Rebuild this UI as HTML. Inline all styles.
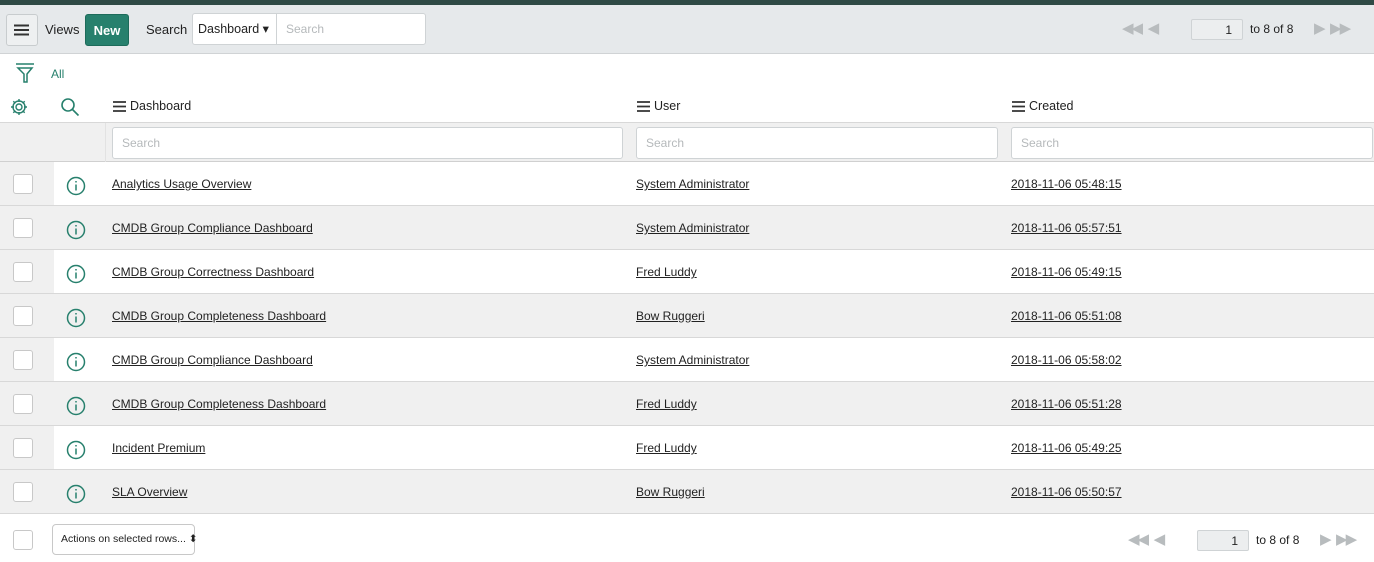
<!DOCTYPE html>
<html><head><style>
*{box-sizing:border-box;margin:0;padding:0}
body{width:1374px;height:562px;background:#fff;font-family:"Liberation Sans",sans-serif;font-size:12px;color:#222;position:relative;overflow:hidden}
.a{position:absolute;white-space:nowrap}
.top{left:0;top:0;width:1374px;height:5px;background:#2f4a45}
.hdr{left:0;top:5px;width:1374px;height:49px;background:#e6e9eb;border-bottom:1px solid #d0d3d5}
.btn{border:1px solid #c8ccce;border-radius:3px;background:#eef0f1}
.inp{background:#fff;border:1px solid #cfd3d5;border-radius:3px;color:#b5b9bb;font-size:12px;padding-left:9px;line-height:30px}
.row{left:0;width:1374px;height:44px;border-bottom:1px solid #d8d8d8}
.cb{width:20px;height:20px;border:1px solid #c8c8c8;border-radius:3px;background:#fff}
a{color:#222;text-decoration:underline}
.pg{color:#b8bcbe;font-size:15px;letter-spacing:-2px}
</style></head><body>
<div class="a top"></div>
<div class="a hdr"></div>
<div class="a btn" style="left:6px;top:14px;width:32px;height:32px"></div>
<svg class="a" style="left:14px;top:24px" width="15" height="12"><path d="M0 1.5h15M0 6h15M0 10.5h15" stroke="#333" stroke-width="2"/></svg>
<div class="a" style="left:45px;top:22px;font-size:13px">Views</div>
<div class="a" style="left:85px;top:14px;width:44px;height:32px;background:#27806d;border-radius:3px;color:#fff;font-weight:bold;font-size:13px;text-align:center;line-height:31px;border:1px solid #1d6b5a">New</div>
<div class="a" style="left:146px;top:22px;font-size:13px">Search</div>
<div class="a" style="left:192px;top:13px;width:234px;height:32px;background:#fff;border:1px solid #cfd3d5;border-radius:3px"></div>
<div class="a" style="left:276px;top:14px;width:1px;height:30px;background:#cfd3d5"></div>
<div class="a" style="left:198px;top:21px;font-size:12.5px">Dashboard ▾</div>
<div class="a" style="left:286px;top:22px;color:#b5b9bb">Search</div>
<div class="a pg" style="left:1122px;top:19px">◀◀ &nbsp; ◀</div>
<div class="a" style="left:1191px;top:19px;width:52px;height:21px;border:1px solid #cfd3d5;background:#eceeef;border-radius:2px;text-align:right;padding-right:10px;line-height:20px">1</div>
<div class="a" style="left:1250px;top:22px">to 8 of 8</div>
<div class="a pg" style="left:1314px;top:19px">▶ &nbsp; ▶▶</div>

<svg class="a" style="left:14px;top:62px" width="22" height="22" fill="none" stroke="#27806d" stroke-width="1.5"><path d="M2 2h18M4 6h14l-5 6v8h-3v-8z"/></svg>
<div class="a" style="left:51px;top:67px;color:#27806d;font-size:12px">All</div>
<svg class="a" style="left:9px;top:97px" width="20" height="20" fill="none" stroke="#27806d" stroke-width="1.4"><circle cx="10" cy="10" r="3"/><path d="M10 2v3M10 15v3M2 10h3M15 10h3M4.3 4.3l2.1 2.1M13.6 13.6l2.1 2.1M4.3 15.7l2.1-2.1M13.6 6.4l2.1-2.1"/><circle cx="10" cy="10" r="6"/></svg>
<svg class="a" style="left:60px;top:97px" width="20" height="20" fill="none" stroke="#27806d" stroke-width="1.6"><circle cx="8" cy="8" r="6"/><path d="M12.5 12.5l6 6"/></svg>
<svg class="a" style="left:113px;top:101px" width="13" height="11"><path d="M0 1h13M0 5.5h13M0 10h13" stroke="#333" stroke-width="1.8"/></svg>
<div class="a" style="left:130px;top:99px;font-size:12.5px">Dashboard</div>
<svg class="a" style="left:637px;top:101px" width="13" height="11"><path d="M0 1h13M0 5.5h13M0 10h13" stroke="#333" stroke-width="1.8"/></svg>
<div class="a" style="left:654px;top:99px;font-size:12.5px">User</div>
<svg class="a" style="left:1012px;top:101px" width="13" height="11"><path d="M0 1h13M0 5.5h13M0 10h13" stroke="#333" stroke-width="1.8"/></svg>
<div class="a" style="left:1029px;top:99px;font-size:12.5px">Created</div>

<div class="a" style="left:0;top:122px;width:1374px;height:40px;background:#f0f0f0;border-top:1px solid #d8d8d8;border-bottom:1px solid #d0d0d0"></div>
<div class="a" style="left:105px;top:123px;width:1px;height:39px;background:#e2e2e2"></div>
<div class="a inp" style="left:112px;top:127px;width:511px;height:32px">Search</div>
<div class="a inp" style="left:636px;top:127px;width:362px;height:32px">Search</div>
<div class="a inp" style="left:1011px;top:127px;width:362px;height:32px">Search</div>

<div id="rows"></div>
<script>
var d=[["Analytics Usage Overview","System Administrator","2018-11-06 05:48:15"],["CMDB Group Compliance Dashboard","System Administrator","2018-11-06 05:57:51"],["CMDB Group Correctness Dashboard","Fred Luddy","2018-11-06 05:49:15"],["CMDB Group Completeness Dashboard","Bow Ruggeri","2018-11-06 05:51:08"],["CMDB Group Compliance Dashboard","System Administrator","2018-11-06 05:58:02"],["CMDB Group Completeness Dashboard","Fred Luddy","2018-11-06 05:51:28"],["Incident Premium","Fred Luddy","2018-11-06 05:49:25"],["SLA Overview","Bow Ruggeri","2018-11-06 05:50:57"]];
var h="";d.forEach(function(r,i){var y=162+i*44,bg=i%2?"#f0f0f0":"#fff";
h+='<div class="a row" style="top:'+y+'px;background:'+bg+'"></div><div class="a" style="left:0;top:'+y+'px;width:54px;height:43px;background:#f0f0f0"></div>';
h+='<div class="a cb" style="left:13px;top:'+(y+12)+'px"></div>';
h+='<svg class="a" style="left:66px;top:'+(y+14)+'px" width="20" height="20" fill="none" stroke="#27806d" stroke-width="1.5"><circle cx="10" cy="10" r="8.5"/><path d="M10 8.5v6M10 5v1.5"/></svg>';
h+='<a class="a" style="left:112px;top:'+(y+15)+'px">'+r[0]+'</a><a class="a" style="left:636px;top:'+(y+15)+'px">'+r[1]+'</a><a class="a" style="left:1011px;top:'+(y+15)+'px">'+r[2]+'</a>';});
document.getElementById("rows").innerHTML=h;
</script>
<div class="a cb" style="left:13px;top:530px"></div>
<div class="a" style="left:52px;top:524px;width:143px;height:31px;border:1px solid #c8c8c8;border-radius:4px;font-size:10.5px;line-height:29px;padding-left:8px">Actions on selected rows... ⬍</div>
<div class="a pg" style="left:1128px;top:530px">◀◀ &nbsp; ◀</div>
<div class="a" style="left:1197px;top:530px;width:52px;height:21px;border:1px solid #cfd3d5;background:#eceeef;border-radius:2px;text-align:right;padding-right:10px;line-height:20px">1</div>
<div class="a" style="left:1256px;top:533px">to 8 of 8</div>
<div class="a pg" style="left:1320px;top:530px">▶ &nbsp; ▶▶</div>
</body></html>
